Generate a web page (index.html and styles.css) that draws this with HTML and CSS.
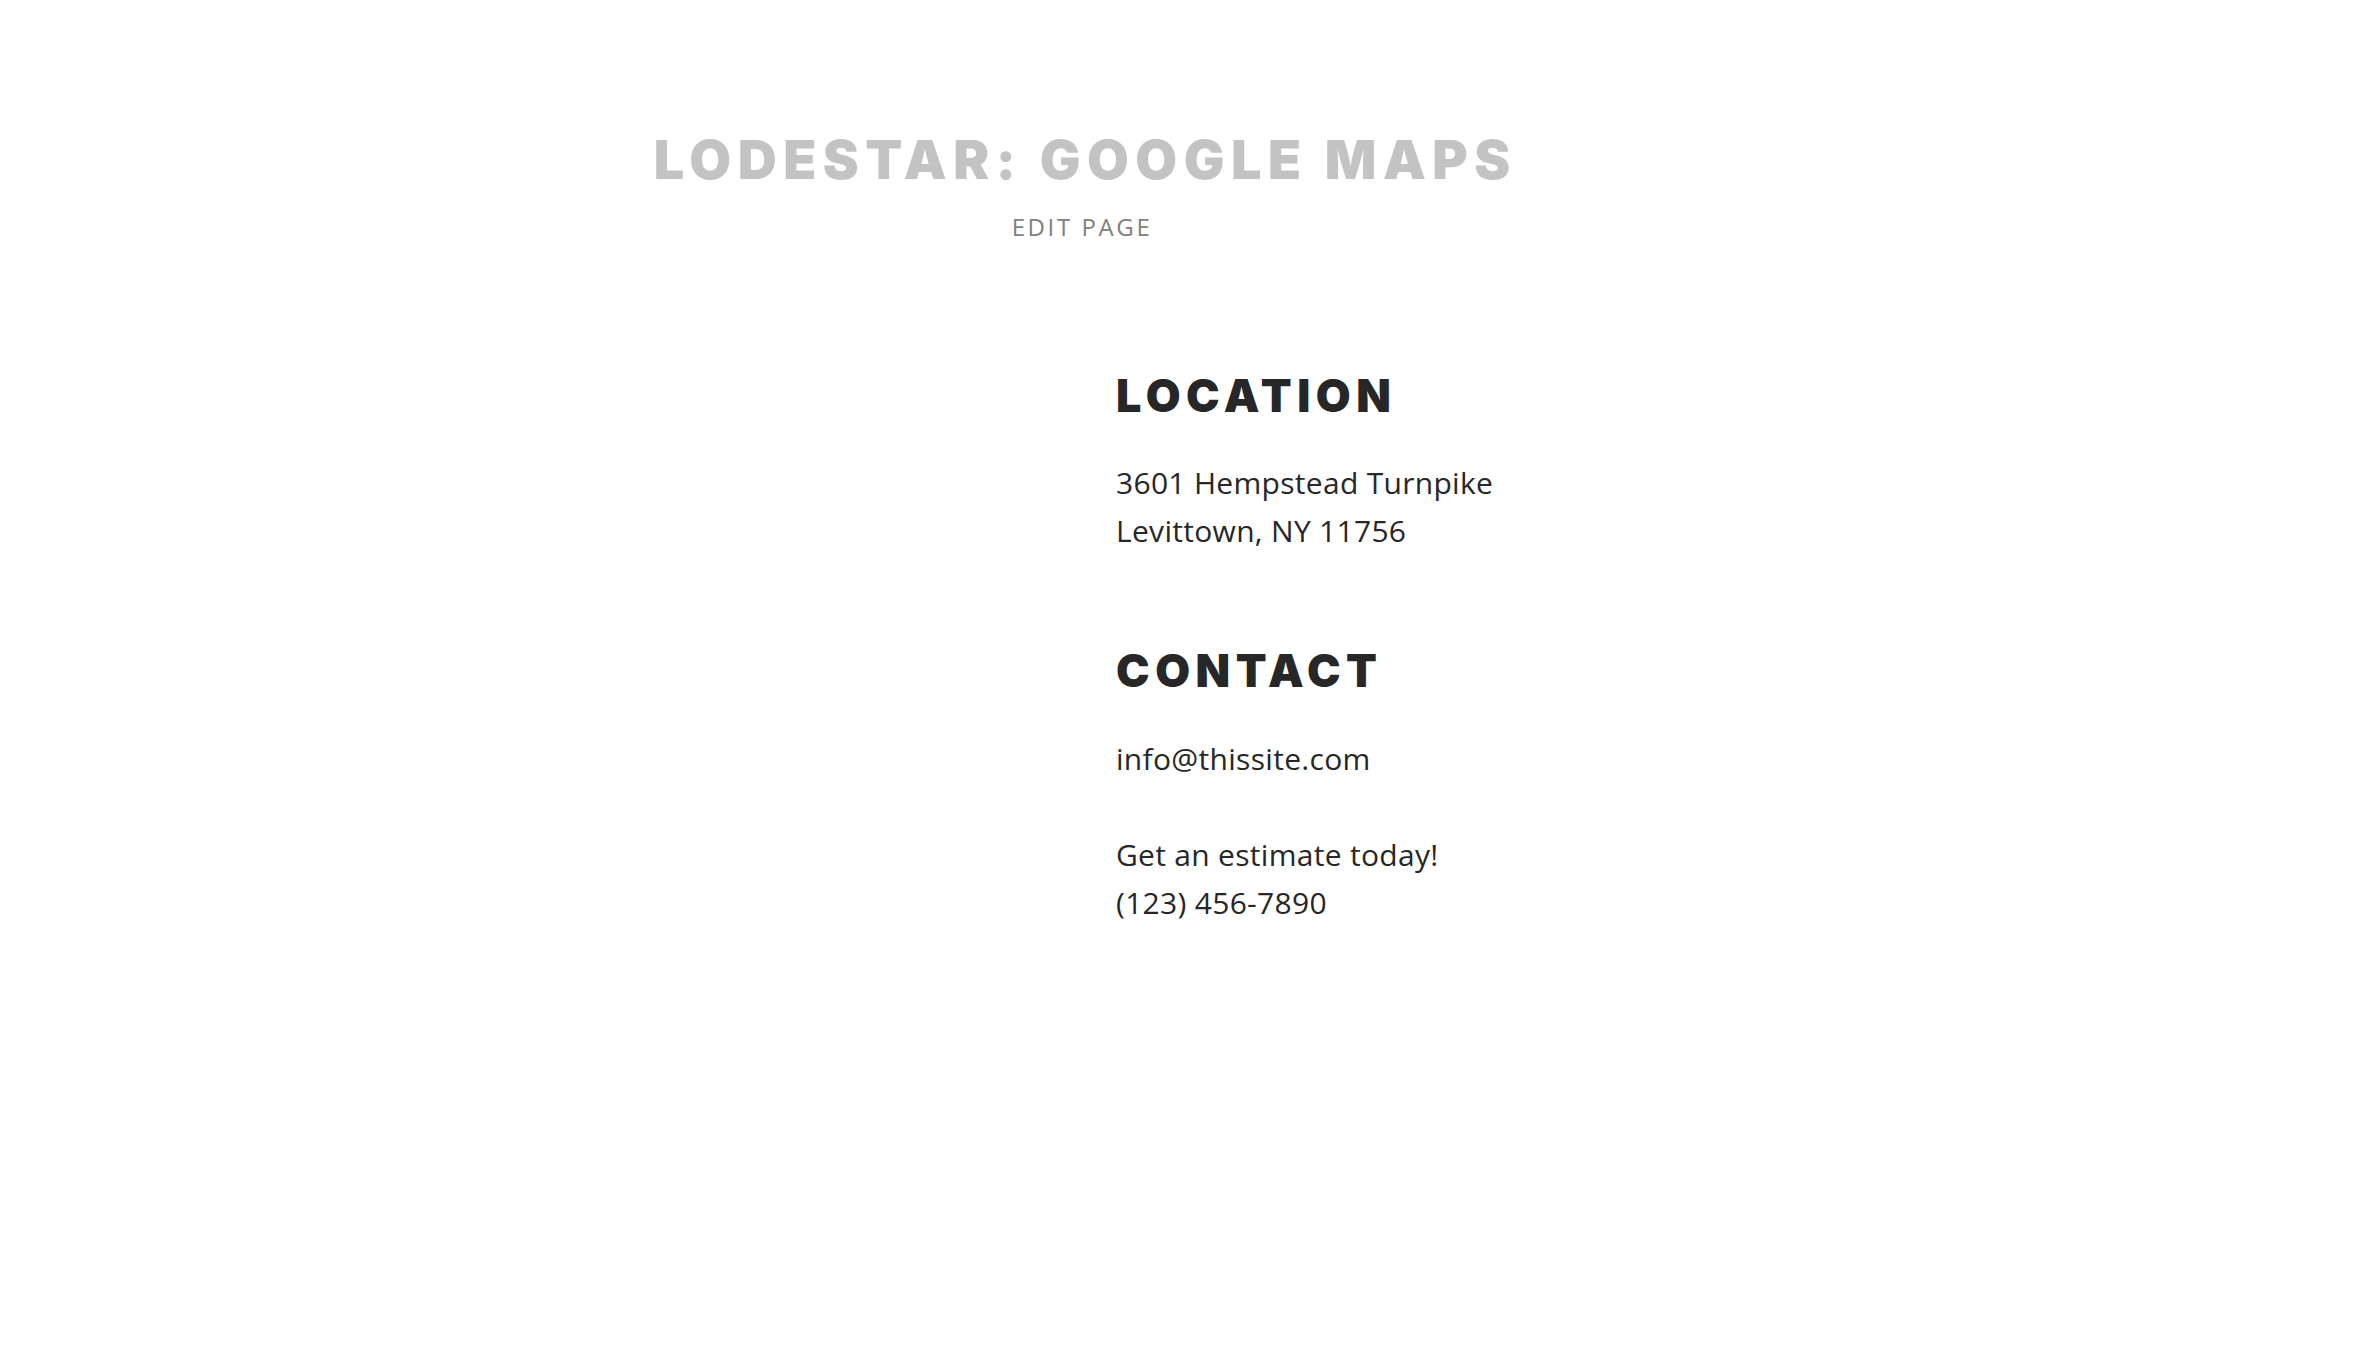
FILE: index.html
```html
<!DOCTYPE html>
<html lang="en">
<head>
<meta charset="utf-8">
<title>Lodestar: Google Maps</title>
<link rel="stylesheet" href="styles.css">
</head>
<body>
<div class="wrap">
  <header class="page-header">
    <h1 class="page-title">Lodestar: Google Maps</h1>
    <a class="edit-link" href="#">Edit Page</a>
  </header>
  <main class="columns">
    <div class="map-col"></div>
    <div class="info-col">
      <h2 class="section-title">Location</h2>
      <p class="text">3601 Hempstead Turnpike<br>Levittown, NY 11756</p>
      <h2 class="section-title contact">Contact</h2>
      <p class="text">info@thissite.com</p>
      <p class="text">Get an estimate today!<br>(123) 456-7890</p>
    </div>
  </main>
</div>
</body>
</html>
```

FILE: styles.css
```css
html, body {
  margin: 0;
  padding: 0;
  background: #ffffff;
}

body {
  font-family: "Open Sans", "Liberation Sans", sans-serif;
  color: #272727;
}

.wrap {
  width: 1600px;
  margin-left: 282px;
}

.page-header {
  padding-top: 133px;
  text-align: center;
}

.page-title {
  margin: 0;
  font-family: Inter, "Liberation Sans", sans-serif;
  font-weight: 900;
  font-size: 54px;
  line-height: 1;
  letter-spacing: 6.5px;
  text-indent: 6.5px;
  text-transform: uppercase;
  color: #c3c3c3;
}

.edit-link {
  display: inline-block;
  margin-top: 28px;
  font-family: "Open Sans", "Liberation Sans", sans-serif;
  font-size: 24px;
  line-height: 1;
  letter-spacing: 2.6px;
  text-transform: uppercase;
  text-decoration: none;
  color: #808080;
}

.columns {
  display: grid;
  grid-template-columns: 1fr 1fr;
  column-gap: 68px;
  padding-top: 132px;
}

.section-title {
  margin: 0 0 41px 0;
  font-family: Inter, "Liberation Sans", sans-serif;
  font-weight: 900;
  font-size: 45px;
  line-height: 1;
  letter-spacing: 5.5px;
  text-transform: uppercase;
  color: #272727;
}

.section-title.contact {
  margin-top: 93px;
  margin-bottom: 42px;
}

.text {
  margin: 0 0 48px 0;
  font-size: 30px;
  line-height: 48px;
  letter-spacing: 0.3px;
  color: #272727;
}
```
